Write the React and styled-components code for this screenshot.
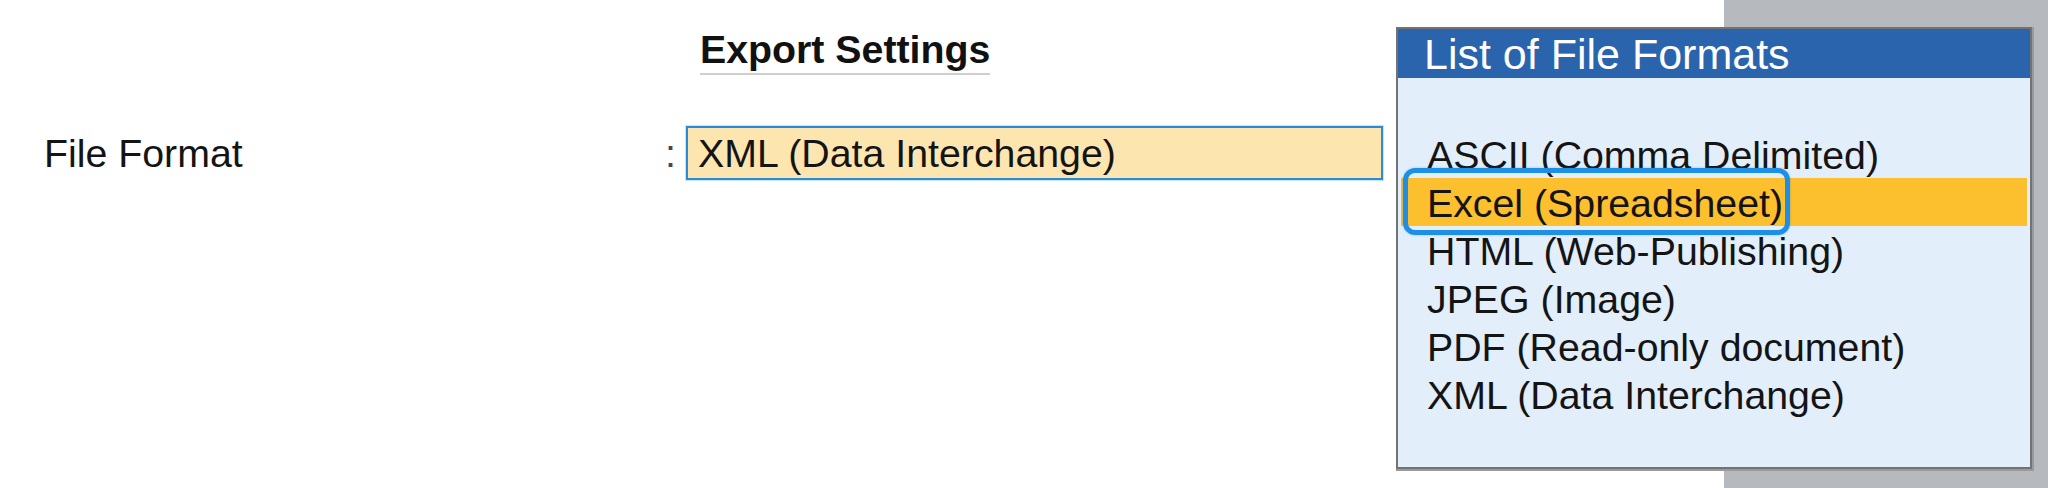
import React from "react";
import styled, { createGlobalStyle } from "styled-components";

const GlobalStyle = createGlobalStyle`
  html, body {
    margin: 0;
    padding: 0;
    background: #ffffff;
  }
  body {
    font-family: "Liberation Sans", Arial, sans-serif;
    color: #141414;
  }
`;

const formats = [
  "ASCII (Comma Delimited)",
  "Excel (Spreadsheet)",
  "HTML (Web-Publishing)",
  "JPEG (Image)",
  "PDF (Read-only document)",
  "XML (Data Interchange)",
];

const App = () => {
  const selected = "Excel (Spreadsheet)";
  return (
    <>
      <GlobalStyle />
      <Screen>
        <Main>
          <Title>Export Settings</Title>
          <Row>
            <Label>File Format</Label>
            <Colon>:</Colon>
            <Field>XML (Data Interchange)</Field>
          </Row>
        </Main>
        <Sidebar />
        <Popup>
          <PopupHeader>List of File Formats</PopupHeader>
          <List>
            {formats.map((f) => (
              <Item key={f} $active={f === selected}>
                <ItemText $focused={f === selected}>{f}</ItemText>
              </Item>
            ))}
          </List>
        </Popup>
      </Screen>
    </>
  );
};

const Screen = styled.div`
  position: relative;
  display: flex;
  width: 2048px;
  height: 488px;
  overflow: hidden;
  font-size: 39.3px;
`;

const Main = styled.div`
  flex: 0 0 1724px;
  background: #ffffff;
  padding-top: 26px;
  box-sizing: border-box;
`;

const Sidebar = styled.div`
  flex: 1;
  background: #b6b9bd;
`;

const Title = styled.div`
  display: inline-block;
  margin-left: 700px;
  font-weight: bold;
  line-height: 47px;
  color: #111;
  border-bottom: 2px solid #cfcfcf;
`;

const Row = styled.div`
  display: flex;
  align-items: center;
  margin-top: 51px;
`;

const Label = styled.div`
  width: 621px;
  padding-left: 44px;
  line-height: 48px;
`;

const Colon = styled.div`
  width: 21px;
  line-height: 48px;
  color: #445;
`;

const Field = styled.div`
  width: 697px;
  height: 54px;
  box-sizing: border-box;
  border: 2px solid #2a8bd9;
  box-shadow: 0 0 0 1px rgba(42, 139, 217, 0.25);
  background: #fde5b0;
  padding-left: 10px;
  line-height: 50px;
`;

const Popup = styled.div`
  position: absolute;
  left: 1396px;
  top: 27px;
  width: 636px;
  height: 442px;
  box-sizing: border-box;
  border: 2px solid #737373;
  box-shadow: 1px 1px 0 1px #9a9a9a;
  background: #e2eefa;
  display: flex;
  flex-direction: column;
`;

const PopupHeader = styled.div`
  height: 49px;
  background: #2a64ad;
  color: #ffffff;
  font-size: 43px;
  line-height: 50px;
  padding-left: 26px;
  white-space: nowrap;
`;

const List = styled.div`
  display: flex;
  flex-direction: column;
  padding: 52px 3px 0;
`;

const Item = styled.div`
  height: 48px;
  line-height: 50px;
  padding-left: 26px;
  background: ${(p) => (p.$active ? "#fcbf2d" : "transparent")};
  white-space: nowrap;
`;

const ItemText = styled.span`
  position: relative;
  display: inline-block;
  &::after {
    content: "";
    display: ${(p) => (p.$focused ? "block" : "none")};
    position: absolute;
    left: -24px;
    right: -7px;
    top: -10px;
    bottom: -7px;
    border: 5px solid #1d8fe6;
    border-radius: 12px;
    box-shadow: 0 0 2px rgba(29, 143, 230, 0.5);
    pointer-events: none;
  }
`;

export default App;
